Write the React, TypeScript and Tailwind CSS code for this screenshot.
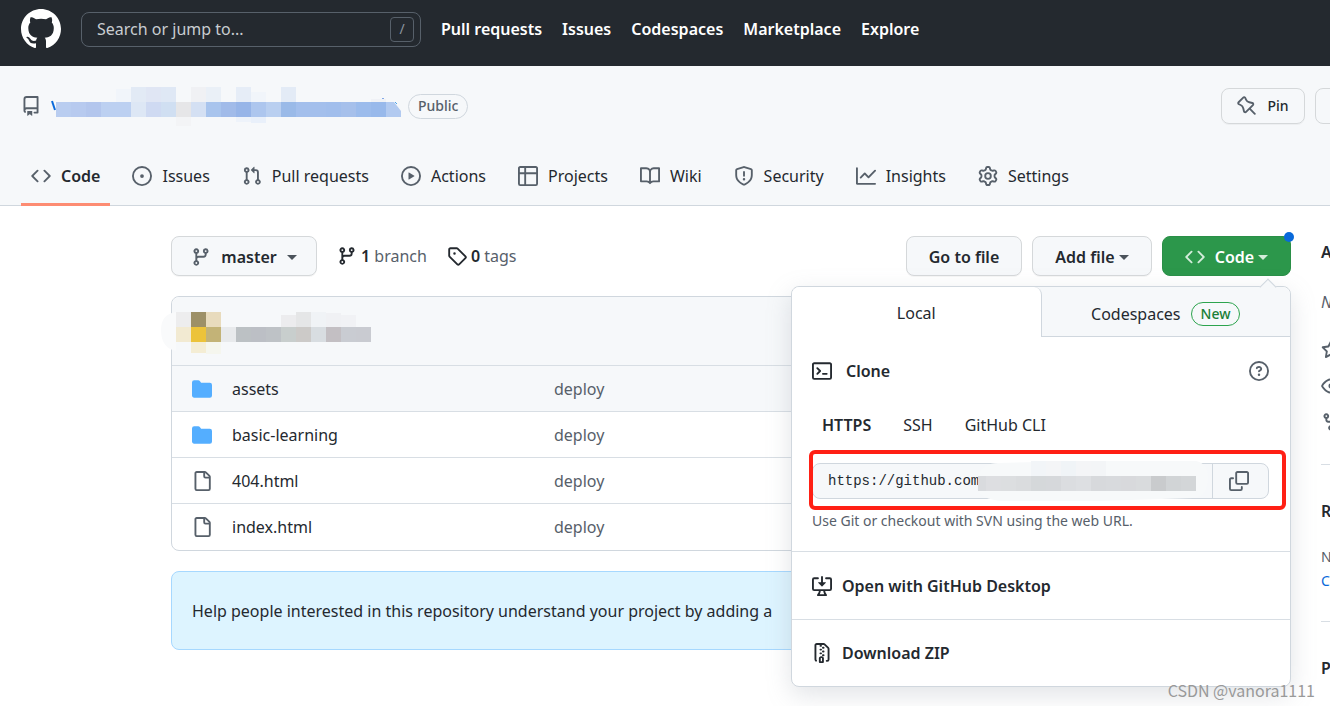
import React from "react";

const paths = {
  github:
    "M8 0C3.58 0 0 3.58 0 8c0 3.54 2.29 6.53 5.47 7.59.4.07.55-.17.55-.38 0-.19-.01-.82-.01-1.49-2.01.37-2.53-.49-2.69-.94-.09-.23-.48-.94-.82-1.13-.28-.15-.68-.52-.01-.53.63-.01 1.08.58 1.23.82.72 1.21 1.87.87 2.33.66.07-.52.28-.87.51-1.07-1.78-.2-3.64-.89-3.64-3.95 0-.87.31-1.59.82-2.15-.08-.2-.36-1.02.08-2.12 0 0 .67-.21 2.2.82.64-.18 1.32-.27 2-.27.68 0 1.36.09 2 .27 1.53-1.04 2.2-.82 2.2-.82.44 1.1.16 1.92.08 2.12.51.56.82 1.27.82 2.15 0 3.07-1.87 3.75-3.65 3.95.29.25.54.73.54 1.48 0 1.07-.01 1.93-.01 2.2 0 .21.15.46.55.38A8.013 8.013 0 0016 8c0-4.42-3.58-8-8-8z",
  repo: "M2 2.5A2.5 2.5 0 014.5 0h8.75a.75.75 0 01.75.75v12.5a.75.75 0 01-.75.75h-2.5a.75.75 0 110-1.5h1.75v-2h-8a1 1 0 00-.714 1.7.75.75 0 01-1.072 1.05A2.495 2.495 0 012 11.5v-9zm10.5-1V9h-8c-.356 0-.694.074-1 .208V2.5a1 1 0 011-1h8zM5 12.25v3.25a.25.25 0 00.4.2l1.45-1.087a.25.25 0 01.3 0L8.6 15.7a.25.25 0 00.4-.2v-3.25a.25.25 0 00-.25-.25h-3.5a.25.25 0 00-.25.25z",
  code: "M4.72 3.22a.75.75 0 011.06 1.06L2.06 8l3.72 3.72a.75.75 0 11-1.06 1.06L.47 8.53a.75.75 0 010-1.06l4.25-4.25zm6.56 0a.75.75 0 10-1.06 1.06L13.94 8l-3.72 3.72a.75.75 0 101.06 1.06l4.25-4.25a.75.75 0 000-1.06l-4.25-4.25z",
  issue:
    "M8 9.5a1.5 1.5 0 100-3 1.5 1.5 0 000 3zM8 0a8 8 0 100 16A8 8 0 008 0zM1.5 8a6.5 6.5 0 1113 0 6.5 6.5 0 01-13 0z",
  pull: "M7.177 3.073L9.573.677A.25.25 0 0110 .854v4.792a.25.25 0 01-.427.177L7.177 3.427a.25.25 0 010-.354zM3.75 2.5a.75.75 0 100 1.5.75.75 0 000-1.5zm-2.25.75a2.25 2.25 0 113 2.122v5.256a2.251 2.251 0 11-1.5 0V5.372A2.25 2.25 0 011.5 3.25zM11 2.5h-1V4h1a1 1 0 011 1v5.628a2.251 2.251 0 101.5 0V5A2.5 2.5 0 0011 2.5zm1 10.25a.75.75 0 111.5 0 .75.75 0 01-1.5 0zM3.75 12a.75.75 0 100 1.5.75.75 0 000-1.5z",
  play: "M1.5 8a6.5 6.5 0 1113 0 6.5 6.5 0 01-13 0zM8 0a8 8 0 100 16A8 8 0 008 0zM6.379 5.227A.25.25 0 006 5.442v5.117a.25.25 0 00.379.214l4.264-2.559a.25.25 0 000-.428L6.379 5.227z",
  table:
    "M0 1.75C0 .784.784 0 1.75 0h12.5C15.216 0 16 .784 16 1.75v12.5A1.75 1.75 0 0114.25 16H1.75A1.75 1.75 0 010 14.25V1.75zM1.5 6.5v7.75c0 .138.112.25.25.25H5v-8H1.5zM5 5H1.5V1.75a.25.25 0 01.25-.25H5V5zm1.5 1.5v8h7.75a.25.25 0 00.25-.25V6.5h-8zm8-1.5h-8V1.5h7.75a.25.25 0 01.25.25V5z",
  book: "M0 1.75A.75.75 0 01.75 1h4.253c1.227 0 2.317.59 3 1.501A3.744 3.744 0 0111.006 1h4.245a.75.75 0 01.75.75v10.5a.75.75 0 01-.75.75h-4.507a2.25 2.25 0 00-1.591.659l-.622.621a.75.75 0 01-1.06 0l-.622-.621A2.25 2.25 0 005.258 13H.75a.75.75 0 01-.75-.75V1.75zm8.755 3a2.25 2.25 0 012.25-2.25H14.5v9h-3.757c-.71 0-1.4.201-1.992.572l.004-7.322zm-1.504 7.324l.004-5.073-.002-2.253A2.25 2.25 0 005.003 2.5H1.5v9h3.757a3.75 3.75 0 011.994.574z",
  shield:
    "M7.467.133a1.75 1.75 0 011.066 0l5.25 1.68A1.75 1.75 0 0115 3.48V7c0 1.566-.32 3.182-1.303 4.682-.983 1.498-2.585 2.813-5.032 3.855a1.7 1.7 0 01-1.33 0c-2.447-1.042-4.049-2.357-5.032-3.855C1.32 10.182 1 8.566 1 7V3.48a1.75 1.75 0 011.217-1.667l5.25-1.68zm.61 1.429a.25.25 0 00-.153 0l-5.25 1.68a.25.25 0 00-.174.238V7c0 1.358.275 2.666 1.057 3.86.784 1.194 2.121 2.34 4.366 3.297a.2.2 0 00.154 0c2.245-.956 3.582-2.104 4.366-3.298C13.225 9.666 13.5 8.36 13.5 7V3.48a.25.25 0 00-.174-.237l-5.25-1.68zM9 10.5a1 1 0 11-2 0 1 1 0 012 0zm-.25-5.75a.75.75 0 10-1.5 0v3a.75.75 0 001.5 0v-3z",
  graph:
    "M1.5 1.75a.75.75 0 00-1.5 0v12.5c0 .414.336.75.75.75h14.5a.75.75 0 000-1.5H1.5V1.75zm14.28 2.53a.75.75 0 00-1.06-1.06L10 7.94 7.53 5.47a.75.75 0 00-1.06 0L3.22 8.72a.75.75 0 001.06 1.06L7 7.06l2.47 2.47a.75.75 0 001.06 0l5.25-5.25z",
  gear: "M8 0a8.2 8.2 0 0 1 .701.031C9.444.095 9.99.645 10.16 1.29l.288 1.107c.018.066.079.158.212.224.231.114.454.243.668.386.123.082.233.09.299.071l1.103-.303c.644-.176 1.392.021 1.82.63.27.385.506.792.704 1.218.315.675.111 1.422-.364 1.891l-.814.806c-.049.048-.098.147-.088.294.016.257.016.515 0 .772-.01.147.038.246.088.294l.814.806c.475.469.679 1.216.364 1.891a7.977 7.977 0 0 1-.704 1.217c-.428.61-1.176.807-1.82.63l-1.102-.302c-.067-.019-.177-.011-.3.071a5.909 5.909 0 0 1-.668.386c-.133.066-.194.158-.211.224l-.29 1.106c-.168.646-.715 1.196-1.458 1.26a8.006 8.006 0 0 1-1.402 0c-.743-.064-1.289-.614-1.458-1.26l-.289-1.106c-.018-.066-.079-.158-.212-.224a5.738 5.738 0 0 1-.668-.386c-.123-.082-.233-.09-.299-.071l-1.103.303c-.644.176-1.392-.021-1.82-.63a8.12 8.12 0 0 1-.704-1.218c-.315-.675-.111-1.422.363-1.891l.815-.806c.05-.048.098-.147.088-.294a6.214 6.214 0 0 1 0-.772c.01-.147-.038-.246-.088-.294l-.815-.806C.635 6.045.431 5.298.746 4.623a7.92 7.92 0 0 1 .704-1.217c.428-.61 1.176-.807 1.82-.63l1.102.302c.067.019.177.011.3-.071.214-.143.437-.272.668-.386.133-.066.194-.158.211-.224l.29-1.106C6.009.645 6.556.095 7.299.03 7.53.01 7.764 0 8 0Zm-.571 1.525c-.036.003-.108.036-.137.146l-.289 1.105c-.147.561-.549.967-.998 1.189-.173.086-.34.183-.5.29-.417.278-.97.423-1.529.27l-1.103-.303c-.109-.03-.175.016-.195.045-.22.312-.412.644-.573.99-.014.031-.021.11.059.19l.815.806c.411.406.562.957.53 1.456a4.709 4.709 0 0 0 0 .582c.032.499-.119 1.05-.53 1.456l-.815.806c-.081.08-.073.159-.059.19.162.346.353.677.573.989.02.03.085.076.195.046l1.102-.303c.56-.153 1.113-.008 1.53.27.161.107.328.204.501.29.447.222.85.629.997 1.189l.289 1.105c.029.109.101.143.137.146a6.6 6.6 0 0 0 1.142 0c.036-.003.108-.036.137-.146l.289-1.105c.147-.561.549-.967.998-1.189.173-.086.34-.183.5-.29.417-.278.97-.423 1.529-.27l1.103.303c.109.029.175-.016.195-.045.22-.313.411-.644.573-.99.014-.031.021-.11-.059-.19l-.815-.806c-.411-.406-.562-.957-.53-1.456a4.709 4.709 0 0 0 0-.582c-.032-.499.119-1.05.53-1.456l.815-.806c.081-.08.073-.159.059-.19a6.464 6.464 0 0 0-.573-.989c-.02-.03-.085-.076-.195-.046l-1.102.303c-.56.153-1.113.008-1.53-.27a4.44 4.44 0 0 0-.501-.29c-.447-.222-.85-.629-.997-1.189l-.289-1.105c-.029-.11-.101-.143-.137-.146a6.6 6.6 0 0 0-1.142 0ZM11 8a3 3 0 1 1-6 0 3 3 0 0 1 6 0ZM9.5 8a1.5 1.5 0 1 0-3.001.001A1.5 1.5 0 0 0 9.5 8Z",
  branch:
    "M9.5 3.25a2.25 2.25 0 1 1 3 2.122V6A2.5 2.5 0 0 1 10 8.5H6a1 1 0 0 0-1 1v1.128a2.251 2.251 0 1 1-1.5 0V5.372a2.25 2.25 0 1 1 1.5 0v1.836A2.493 2.493 0 0 1 6 7h4a1 1 0 0 0 1-1v-.628A2.25 2.25 0 0 1 9.5 3.25Zm-6 0a.75.75 0 1 0 1.5 0 .75.75 0 0 0-1.5 0Zm8.25-.75a.75.75 0 1 0 0 1.5.75.75 0 0 0 0-1.5ZM4.25 12a.75.75 0 1 0 0 1.5.75.75 0 0 0 0-1.5Z",
  tag: "M1 7.775V2.75C1 1.784 1.784 1 2.75 1h5.025c.464 0 .91.184 1.238.513l6.25 6.25a1.75 1.75 0 0 1 0 2.474l-5.026 5.026a1.75 1.75 0 0 1-2.474 0l-6.25-6.25A1.752 1.752 0 0 1 1 7.775Zm1.5 0c0 .066.026.13.073.177l6.25 6.25a.25.25 0 0 0 .354 0l5.025-5.025a.25.25 0 0 0 0-.354l-6.25-6.25a.25.25 0 0 0-.177-.073H2.75a.25.25 0 0 0-.25.25ZM6 5a1 1 0 1 1 0 2 1 1 0 0 1 0-2Z",
  folder:
    "M1.75 1A1.75 1.75 0 0 0 0 2.75v10.5C0 14.216.784 15 1.75 15h12.5A1.75 1.75 0 0 0 16 13.25v-8.5A1.75 1.75 0 0 0 14.25 3H7.5a.25.25 0 0 1-.2-.1l-.9-1.2C6.07 1.26 5.55 1 5 1H1.75Z",
  file: "M2 1.75C2 .784 2.784 0 3.75 0h6.586c.464 0 .909.184 1.237.513l2.914 2.914c.329.328.513.773.513 1.237v9.586A1.75 1.75 0 0 1 13.25 16h-9.5A1.75 1.75 0 0 1 2 14.25Zm1.75-.25a.25.25 0 0 0-.25.25v12.5c0 .138.112.25.25.25h9.5a.25.25 0 0 0 .25-.25V6h-2.75A1.75 1.75 0 0 1 9 4.25V1.5Zm6.75.062V4.25c0 .138.112.25.25.25h2.688l-.011-.013-2.914-2.914-.013-.011Z",
  pin: "M4.456.734a1.75 1.75 0 0 1 2.826.504l.613 1.327a3.081 3.081 0 0 0 2.084 1.707l2.454.584c1.332.317 1.8 1.972.832 2.94L11.06 10l3.72 3.72a.75.75 0 1 1-1.061 1.06L10 11.06l-2.204 2.205c-.968.968-2.623.5-2.94-.832l-.584-2.454a3.081 3.081 0 0 0-1.707-2.084l-1.327-.613a1.75 1.75 0 0 1-.504-2.826L4.456.734ZM5.92 1.866a.25.25 0 0 0-.404-.072L1.794 5.516a.25.25 0 0 0 .072.404l1.328.613A4.582 4.582 0 0 1 5.73 9.63l.584 2.454a.25.25 0 0 0 .42.12l5.47-5.47a.25.25 0 0 0-.12-.42L9.63 5.73a4.581 4.581 0 0 1-3.098-2.537L5.92 1.866Z",
  terminal:
    "M0 2.75C0 1.784.784 1 1.75 1h12.5c.966 0 1.75.784 1.75 1.75v10.5A1.75 1.75 0 0 1 14.25 15H1.75A1.75 1.75 0 0 1 0 13.25Zm1.75-.25a.25.25 0 0 0-.25.25v10.5c0 .138.112.25.25.25h12.5a.25.25 0 0 0 .25-.25V2.75a.25.25 0 0 0-.25-.25ZM7.25 8a.749.749 0 0 1-.22.53l-2.25 2.25a.749.749 0 0 1-1.275-.326.749.749 0 0 1 .215-.734L5.44 8 3.72 6.28a.749.749 0 0 1 .326-1.275.749.749 0 0 1 .734.215l2.25 2.25c.141.14.22.331.22.53Zm1.5 1.5h3a.75.75 0 0 1 0 1.5h-3a.75.75 0 0 1 0-1.5Z",
  question:
    "M0 8a8 8 0 1 1 16 0A8 8 0 0 1 0 8Zm8-6.5a6.5 6.5 0 1 0 0 13 6.5 6.5 0 0 0 0-13ZM6.92 6.085h.001a.749.749 0 1 1-1.342-.67c.169-.339.436-.701.849-.977C6.845 4.16 7.369 4 8 4a2.756 2.756 0 0 1 1.637.525c.503.377.863.965.863 1.725 0 .448-.115.83-.329 1.15-.205.307-.47.513-.692.662-.109.072-.22.138-.313.195l-.006.004a6.24 6.24 0 0 0-.26.16.952.952 0 0 0-.276.245.75.75 0 0 1-1.248-.832c.184-.264.42-.489.692-.661.103-.067.207-.132.313-.195l.007-.004c.1-.061.182-.11.258-.161a.969.969 0 0 0 .277-.245C8.96 6.514 9 6.427 9 6.25a.612.612 0 0 0-.262-.525A1.27 1.27 0 0 0 8 5.5c-.369 0-.595.09-.74.187a1.01 1.01 0 0 0-.34.398ZM9 11a1 1 0 1 1-2 0 1 1 0 0 1 2 0Z",
  copy: "M0 6.75C0 5.784.784 5 1.75 5h1.5a.75.75 0 0 1 0 1.5h-1.5a.25.25 0 0 0-.25.25v7.5c0 .138.112.25.25.25h7.5a.25.25 0 0 0 .25-.25v-1.5a.75.75 0 0 1 1.5 0v1.5A1.75 1.75 0 0 1 9.25 16h-7.5A1.75 1.75 0 0 1 0 14.25ZM5 1.75C5 .784 5.784 0 6.75 0h7.5C15.216 0 16 .784 16 1.75v7.5A1.75 1.75 0 0 1 14.25 11h-7.5A1.75 1.75 0 0 1 5 9.25Zm1.75-.25a.25.25 0 0 0-.25.25v7.5c0 .138.112.25.25.25h7.5a.25.25 0 0 0 .25-.25v-7.5a.25.25 0 0 0-.25-.25Z",
  desktop:
    "m4.927 5.427 2.896 2.896a.25.25 0 0 0 .354 0l2.896-2.896A.25.25 0 0 0 10.896 5H8.75V.75a.75.75 0 1 0-1.5 0V5H5.104a.25.25 0 0 0-.177.427ZM1.573 2.573a.25.25 0 0 0-.073.177v7.5a.25.25 0 0 0 .25.25h12.5a.25.25 0 0 0 .25-.25v-7.5a.25.25 0 0 0-.25-.25h-3a.75.75 0 1 1 0-1.5h3A1.75 1.75 0 0 1 16 2.75v7.5A1.75 1.75 0 0 1 14.25 12h-3.727c.099 1.041.52 1.872 1.292 2.757A.752.752 0 0 1 11.25 16h-6.5a.75.75 0 0 1-.565-1.243c.772-.885 1.192-1.716 1.292-2.757H1.75A1.75 1.75 0 0 1 0 10.25v-7.5A1.75 1.75 0 0 1 1.75 1h3a.75.75 0 0 1 0 1.5h-3a.25.25 0 0 0-.177.073ZM6.982 12a5.72 5.72 0 0 1-.765 2.5h3.566a5.72 5.72 0 0 1-.765-2.5H6.982Z",
  zip: "M3.5 1.75v11.5c0 .09.048.173.126.217a.75.75 0 0 1-.752 1.298A1.748 1.748 0 0 1 2 13.25V1.75C2 .784 2.784 0 3.75 0h5.586c.464 0 .909.185 1.237.513l2.914 2.914c.329.328.513.773.513 1.237v8.586A1.75 1.75 0 0 1 12.25 15h-.5a.75.75 0 0 1 0-1.5h.5a.25.25 0 0 0 .25-.25V4.664a.25.25 0 0 0-.073-.177L9.513 1.573a.25.25 0 0 0-.177-.073H7.25a.75.75 0 0 1 0 1.5h-.5a.75.75 0 0 1 0-1.5h-3a.25.25 0 0 0-.25.25Zm3.75 8.75h.5c.966 0 1.75.784 1.75 1.75v3a.75.75 0 0 1-.75.75h-2.5a.75.75 0 0 1-.75-.75v-3c0-.966.784-1.75 1.75-1.75ZM6 5.25a.75.75 0 0 1 .75-.75h.5a.75.75 0 0 1 0 1.5h-.5A.75.75 0 0 1 6 5.25Zm.75 2.25h.5a.75.75 0 0 1 0 1.5h-.5a.75.75 0 0 1 0-1.5ZM8 6.75A.75.75 0 0 1 8.75 6h.5a.75.75 0 0 1 0 1.5h-.5A.75.75 0 0 1 8 6.75ZM8.75 3h.5a.75.75 0 0 1 0 1.5h-.5a.75.75 0 0 1 0-1.5ZM8 9.75A.75.75 0 0 1 8.75 9h.5a.75.75 0 0 1 0 1.5h-.5A.75.75 0 0 1 8 9.75Zm-1 2.5v2.25h1v-2.25a.25.25 0 0 0-.25-.25h-.5a.25.25 0 0 0-.25.25Z",
  star: "M8 .25a.75.75 0 0 1 .673.418l1.882 3.815 4.21.612a.75.75 0 0 1 .416 1.279l-3.046 2.97.719 4.192a.751.751 0 0 1-1.088.791L8 12.347l-3.766 1.98a.75.75 0 0 1-1.088-.79l.72-4.194L.818 6.374a.75.75 0 0 1 .416-1.28l4.21-.611L7.327.668A.75.75 0 0 1 8 .25Zm0 2.445L6.615 5.5a.75.75 0 0 1-.564.41l-3.097.45 2.24 2.184a.75.75 0 0 1 .216.664l-.528 3.084 2.769-1.456a.75.75 0 0 1 .698 0l2.77 1.456-.53-3.084a.75.75 0 0 1 .216-.664l2.24-2.183-3.096-.45a.75.75 0 0 1-.564-.41L8 2.694Z",
  eye: "M8 2c1.981 0 3.671.992 4.933 2.078 1.27 1.091 2.187 2.345 2.637 3.023a1.62 1.62 0 0 1 0 1.798c-.45.678-1.367 1.932-2.637 3.023C11.67 13.008 9.981 14 8 14c-1.981 0-3.671-.992-4.933-2.078C1.797 10.83.88 9.576.43 8.898a1.62 1.62 0 0 1 0-1.798c.45-.677 1.367-1.931 2.637-3.022C4.33 2.992 6.019 2 8 2ZM1.679 7.932a.12.12 0 0 0 0 .136c.411.622 1.241 1.75 2.366 2.717C5.176 11.758 6.527 12.5 8 12.5c1.473 0 2.825-.742 3.955-1.715 1.124-.967 1.954-2.096 2.366-2.717a.12.12 0 0 0 0-.136c-.412-.621-1.242-1.75-2.366-2.717C10.824 4.242 9.473 3.5 8 3.5c-1.473 0-2.825.742-3.955 1.715-1.124.967-1.954 2.096-2.366 2.717ZM8 10a2 2 0 1 1-.001-3.999A2 2 0 0 1 8 10Z",
  fork: "M5 5.372v.878c0 .414.336.75.75.75h4.5a.75.75 0 0 0 .75-.75v-.878a2.25 2.25 0 1 1 1.5 0v.878a2.25 2.25 0 0 1-2.25 2.25h-1.5v2.128a2.251 2.251 0 1 1-1.5 0V8.5h-1.5A2.25 2.25 0 0 1 3.5 6.25v-.878a2.25 2.25 0 1 1 1.5 0ZM5 3.25a.75.75 0 1 0-1.5 0 .75.75 0 0 0 1.5 0Zm6.75.75a.75.75 0 1 0 0-1.5.75.75 0 0 0 0 1.5Zm-3 8.75a.75.75 0 1 0-1.5 0 .75.75 0 0 0 1.5 0Z",
};

type IconName = keyof typeof paths;

function Icon({ name, className = "size-5 text-[#57606a]" }: { name: IconName; className?: string }) {
  return (
    <svg viewBox="0 0 16 16" fill="currentColor" fillRule="evenodd" aria-hidden="true" className={`shrink-0 ${className}`}>
      <path d={paths[name]} />
    </svg>
  );
}

function Caret({ className = "text-[#4b535b]" }: { className?: string }) {
  return <span className={`size-0 border-x-[5px] border-t-[5px] border-x-transparent border-t-current ${className}`} />;
}

/* Pixelated strip that hides a private name; each cell is 15 units wide. */
type Cell = [x: number, y: number, fill: string, h?: number];
function Mosaic({ cells }: { cells: Cell[] }) {
  return (
    <g shapeRendering="crispEdges">
      {cells.map(([x, y, fill, h = 15], i) => (
        <rect key={i} x={x} y={y} width={15} height={h} fill={fill} />
      ))}
    </g>
  );
}

const strip = (x: number, y: number, fills: string[]): Cell[] => fills.map((f, i) => [x + i * 15, y, f]);

const repoCells: Cell[] = [
  ...strip(5, 15, [
    "#b9cdf0", "#b7caef", "#b3c6ed", "#bcd0f1", "#bcd0f1", "#dde7f5", "#cfdaf2", "#d0dff2",
    "#e6e6e8", "#d4e0f3", "#a8c4ed", "#a1bbe9", "#97b5e8", "#adc6ee", "#b9cff0", "#9abae8",
    "#a3bfec", "#a3bfec", "#a1beec", "#a6c0eb", "#9cbcec", "#98b9eb", "#b2caf0",
  ]),
  [65, 2, "#f1f5fa", 13],
  ...strip(80, 0, ["#e2eaf5", "#e0e6f4", "#dfe8f5"]),
  [140, 0, "#f0f1f4"],
  [155, 0, "#eaf0f7"],
  [185, 0, "#e6edf7"],
  [200, 5, "#f1f5fa", 10],
  [230, 0, "#e3ebf6"],
  [320, 12, "#f0f2f6", 3],
  [125, 30, "#f3f4f6", 9],
  [185, 30, "#eef3fa", 5],
  [200, 30, "#e9f0fa", 6],
];

const commitCells: Cell[] = [
  [15, 2, "#ededee"],
  [30, 2, "#9d9067"],
  [45, 2, "#e8dbbd"],
  [120, 5, "#ececee", 12],
  [135, 2, "#e5e6e7"],
  [150, 2, "#f0f3f6"],
  [165, 3, "#f0f1f4", 14],
  [180, 5, "#f1f2f5", 12],
  ...strip(15, 17, [
    "#f2ead2", "#ecc33a", "#c3b377", "#e8eaec", "#bcc1c4", "#bcbfc5", "#bec2c6",
    "#c8cecd", "#cccac8", "#d8dde1", "#c3bfc3", "#c9ccd2", "#c9cbd1",
  ]),
  [30, 32, "#f4edd4", 11],
  [45, 32, "#f5f6ee", 12],
];

const urlCells: Cell[] = [
  ...strip(53, 0, ["#f2f5f8", "#f4f5f7", "#f0f4f7", "#f4f5f7", "#f3f5f7"]),
  ...strip(-7, 15, [
    "#d9dbde", "#dddee1", "#dcdee0", "#dadcde", "#d5d8da", "#d6d8db", "#dbdde0", "#dddfe2",
    "#d7d9dc", "#d8dadd", "#d8d9dc", "#d9dbdd", "#c9cbcd", "#d1d4d6", "#d3d6d8",
  ]),
];

const tabs: { icon: IconName; label: string }[] = [
  { icon: "code", label: "Code" },
  { icon: "issue", label: "Issues" },
  { icon: "pull", label: "Pull requests" },
  { icon: "play", label: "Actions" },
  { icon: "table", label: "Projects" },
  { icon: "book", label: "Wiki" },
  { icon: "shield", label: "Security" },
  { icon: "graph", label: "Insights" },
  { icon: "gear", label: "Settings" },
];

const files: { icon: IconName; name: string }[] = [
  { icon: "folder", name: "assets" },
  { icon: "folder", name: "basic-learning" },
  { icon: "file", name: "404.html" },
  { icon: "file", name: "index.html" },
];

const button =
  "flex h-10 items-center justify-center rounded-lg border border-[#d5d8da] bg-[#f6f8fa] pt-0.5 font-semibold shadow-[0_1px_0_rgba(27,31,36,0.04)]";

function TopBar() {
  return (
    <header className="flex h-[66px] items-center gap-5 bg-[#24292f] px-[21px] pb-2 font-semibold text-white">
      <a href="#" aria-label="Homepage">
        <Icon name="github" className="size-10 text-white" />
      </a>
      <label className="flex h-[35px] w-[340px] items-center rounded-lg border border-[#57606a] pr-1.5 pl-[15px] font-normal">
        <input
          type="text"
          aria-label="Search or jump to"
          placeholder="Search or jump to..."
          className="min-w-0 flex-1 bg-transparent placeholder-[#c9cdd1] outline-none"
        />
        <kbd className="flex h-[25px] w-6 items-center justify-center rounded-sm border border-[#57606a] font-['Noto_Sans',sans-serif] text-sm text-[#8c959f]">
          /
        </kbd>
      </label>
      <nav className="flex gap-5">
        {["Pull requests", "Issues", "Codespaces", "Marketplace", "Explore"].map((t) => (
          <a key={t} href="#">
            {t}
          </a>
        ))}
      </nav>
    </header>
  );
}

function RepoHeader() {
  return (
    <div className="border-b border-[#d0d7de] bg-[#f6f8fa] pt-[22px]">
      <div className="flex h-9 items-center pl-[21px]">
        <Icon name="repo" />
        <a href="#" aria-label="Repository name" className="ml-2.5">
          <svg width="350" height="39" viewBox="0 0 350 39" className="block">
            <path d="M1 14l3 9" stroke="#0969da" strokeWidth="2" />
            <circle cx="332" cy="12" r="1" fill="#5c8fe0" />
            <Mosaic cells={repoCells} />
            <path d="M343 15h7v9z" fill="#f6f8fa" />
            <path d="M344 15l2 2" stroke="#4aa3e8" strokeWidth="1" />
          </svg>
        </a>
        <span className="ml-[7px] flex h-[25px] items-center rounded-full border border-[#d0d7de] px-[9px] text-sm font-medium text-[#57606a]">
          Public
        </span>
        <div className="ml-auto flex gap-2.5">
          <button className="flex h-9 w-[84px] items-center justify-center gap-2.5 rounded-lg border border-[#d5d8da] text-sm font-medium shadow-[0_1px_0_rgba(27,31,36,0.04)]">
            <Icon name="pin" />
            Pin
          </button>
          <button aria-label="Unwatch" className="-mr-20 h-9 w-[95px] rounded-lg border border-[#d5d8da]" />
        </div>
      </div>
      <nav className="mt-[23px] flex gap-3 pl-[21px]">
        {tabs.map((t, i) => (
          <a
            key={t.label}
            href="#"
            className={
              i === 0
                ? "-mb-px flex h-[59px] items-center gap-2.5 border-b-[3px] border-[#fd8c73] px-2.5 pt-0.5 font-semibold"
                : "flex h-[58px] items-center gap-2.5 px-2.5"
            }
          >
            <Icon name={t.icon} />
            {t.label}
          </a>
        ))}
      </nav>
    </div>
  );
}

function CodeMenu() {
  return (
    <div className="absolute top-[50px] right-0 z-10 w-[500px] rounded-lg border border-[#d0d7de] bg-white text-[#24292f] shadow-[0_8px_24px_rgba(140,149,159,0.25)]">
      <span className="absolute -top-1.5 right-4 size-3 rotate-45 border-t border-l border-[#d0d7de] bg-[#f6f8fa]" />
      <div role="tablist" className="flex h-[50px] rounded-t-lg bg-[#f6f8fa]">
        <button role="tab" aria-selected="true" className="flex-1 rounded-t-lg border-r border-[#d0d7de] bg-white pt-0.5">
          Local
        </button>
        <button role="tab" aria-selected="false" className="relative flex flex-1 items-center justify-center gap-2.5 border-b border-[#d0d7de] pt-1">
          Codespaces
          <span className="flex h-6 items-center rounded-full border border-[#2da44e] px-[9px] text-sm font-medium text-[#1a7f37]">New</span>
        </button>
      </div>

      <div className="pt-[22px] pr-[21px] pb-[18px] pl-5">
        <div className="flex items-center">
          <Icon name="terminal" className="mr-3.5 size-5 text-[#24292f]" />
          <span className="mr-auto font-semibold">Clone</span>
          <a href="#" aria-label="Which remote URL should I use?">
            <Icon name="question" />
          </a>
        </div>
        <div className="mt-[30px] flex gap-8 px-2.5">
          <button className="font-semibold">HTTPS</button>
          <button>SSH</button>
          <button>GitHub CLI</button>
        </div>
        <div className="relative mt-[26px] flex h-9 rounded-lg border border-[#d0d7de] bg-[#f6f8fa]">
          <input
            readOnly
            aria-label="Clone URL"
            value="https://github.com"
            className="min-w-0 flex-1 bg-transparent pl-[15px] font-['Liberation_Mono',monospace] text-sm outline-none"
          />
          <button aria-label="Copy URL" className="flex w-14 items-center justify-center border-l border-[#d0d7de] pr-1">
            <Icon name="copy" />
          </button>
          <svg width="232" height="42" viewBox="0 0 232 42" className="absolute -top-[3px] left-[165px]">
            <path d="M0 14Q6 2 20 2L110 0H218Q230 2 230 18Q229 36 215 37L120 40H24Q2 38 0 28Z" fill="#f7f9fa" />
            <Mosaic cells={urlCells} />
          </svg>
          <div className="pointer-events-none absolute -top-[14px] -right-[18px] -bottom-[12px] -left-[4px] rounded-md border-4 border-[#ff2015]" />
        </div>
        <p className="mt-2.5 text-sm leading-6 text-[#57606a]">Use Git or checkout with SVN using the web URL.</p>
      </div>

      <a href="#" className="flex h-[68px] items-center gap-2.5 border-t border-[#d8dee4] px-5 font-semibold">
        <Icon name="desktop" className="size-5 text-[#24292f]" />
        Open with GitHub Desktop
      </a>
      <a href="#" className="flex h-[67px] items-center gap-2.5 border-t border-[#d8dee4] px-5 font-semibold">
        <Icon name="zip" className="size-5 text-[#24292f]" />
        Download ZIP
      </a>
    </div>
  );
}

function Toolbar() {
  return (
    <div className="relative flex items-center">
      <button className={`${button} w-[146px] gap-2.5`}>
        <Icon name="branch" />
        master
        <Caret />
      </button>
      <a href="#" className="ml-5 flex items-center gap-1 text-[#57606a]">
        <Icon name="branch" className="size-5 text-[#24292f]" />
        <span>
          <strong className="font-semibold text-[#24292f]">1</strong> branch
        </span>
      </a>
      <a href="#" className="ml-5 flex items-center gap-1 text-[#57606a]">
        <Icon name="tag" className="size-5 text-[#24292f]" />
        <span>
          <strong className="font-semibold text-[#24292f]">0</strong> tags
        </span>
      </a>
      <div className="ml-auto flex gap-2.5">
        <button className={`${button} w-[116px]`}>Go to file</button>
        <button className={`${button} w-[120px] gap-1`}>
          Add file
          <Caret />
        </button>
        <div className="relative">
          <button className="flex h-10 w-[129px] items-center justify-center gap-2.5 rounded-lg border border-[#2a8f47] bg-[#2c974b] pt-0.5 font-semibold text-white">
            <Icon name="code" className="size-5 text-[#d3ecda]" />
            <span className="flex items-center gap-1">
              Code
              <Caret className="text-[#d3ecda]" />
            </span>
          </button>
          <span className="absolute -top-1 -right-[3px] size-2.5 rounded-full bg-[#0969da]" />
        </div>
      </div>
      <CodeMenu />
    </div>
  );
}

function FileTable() {
  return (
    <div className="relative mt-5 rounded-lg border border-[#d0d7de]">
      <div className="h-[68px] rounded-t-lg bg-[#f6f8fa]" />
      <svg width="215" height="50" viewBox="0 0 215 50" className="absolute top-[13px] -left-[11px]">
        <path d="M15 2Q0 4 0 20Q0 38 15 41Z" fill="#f9fafb" />
        <Mosaic cells={commitCells} />
      </svg>
      <table className="w-full table-fixed text-left">
        <tbody>
          {files.map((f) => (
            <tr key={f.name} className="h-[46px] border-t border-[#d8dee4] first:bg-[#f6f8fa]">
              <td className="w-[60px] pl-5">
                <Icon name={f.icon} className={f.icon === "folder" ? "size-5 text-[#54aeff]" : "size-5 text-[#57606a]"} />
              </td>
              <td className="w-[322px]">
                <a href="#">{f.name}</a>
              </td>
              <td className="text-[#57606a]">
                <a href="#">deploy</a>
              </td>
            </tr>
          ))}
        </tbody>
      </table>
    </div>
  );
}

function Sidebar() {
  return (
    <aside className="-mr-[311px] w-80 shrink-0 pt-1">
      <h2 className="font-semibold">About</h2>
      <p className="mt-[26px] text-[#57606a] italic">No description</p>
      <div className="mt-[26px] flex flex-col gap-4">
        <Icon name="star" />
        <Icon name="eye" />
        <Icon name="fork" />
      </div>
      <section className="mt-8 border-t border-[#d8dee4] pt-[34px]">
        <h2 className="font-semibold">Releases</h2>
        <p className="mt-6 text-sm text-[#57606a]">No releases published</p>
        <a href="#" className="mt-1 block text-sm text-[#0969da]">
          Create a new release
        </a>
      </section>
      <section className="mt-[30px] border-t border-[#d8dee4] pt-[34px]">
        <h2 className="font-semibold">Packages</h2>
      </section>
    </aside>
  );
}

export default function App() {
  return (
    <div className="relative min-h-screen overflow-hidden bg-white font-['Noto_Sans',sans-serif] text-base leading-6 whitespace-nowrap text-[#24292f]">
      <TopBar />
      <RepoHeader />
      <div className="flex gap-[30px] pt-[30px] pl-[171px]">
        <main className="min-w-0 flex-1">
          <Toolbar />
          <FileTable />
          <div className="mt-5 flex h-[79px] items-center overflow-hidden rounded-lg border border-[#a6d8ff] bg-[#ddf4ff] px-5 pt-0.5">
            Help people interested in this repository understand your project by adding a
          </div>
        </main>
        <Sidebar />
      </div>
      <div className="absolute right-[15px] bottom-1 z-20 font-['Noto_Sans_CJK_SC',sans-serif] text-base text-[#999999]">
        CSDN @vanora1111
      </div>
    </div>
  );
}
